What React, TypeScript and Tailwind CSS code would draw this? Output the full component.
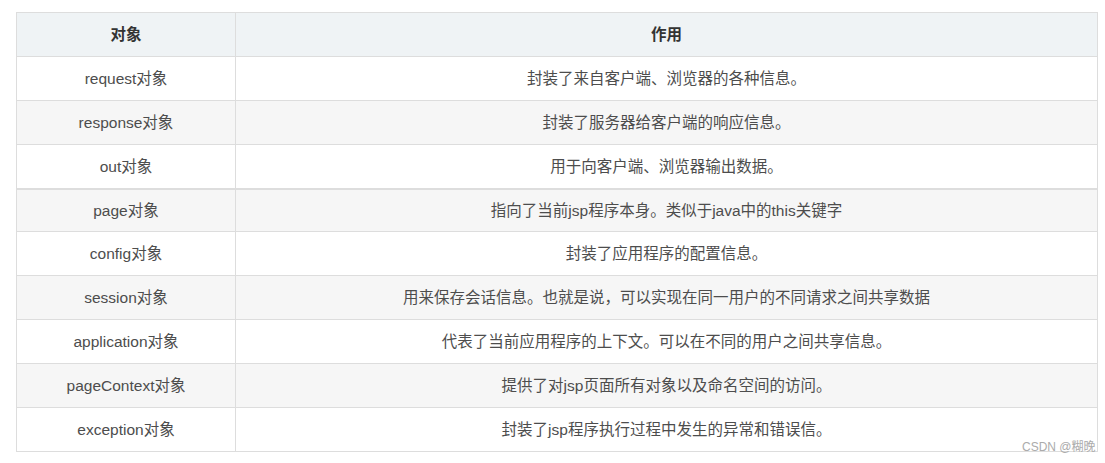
import React from 'react';

const rows: [string, string][] = [
  ['request对象', '封装了来自客户端、浏览器的各种信息。'],
  ['response对象', '封装了服务器给客户端的响应信息。'],
  ['out对象', '用于向客户端、浏览器输出数据。'],
  ['page对象', '指向了当前jsp程序本身。类似于java中的this关键字'],
  ['config对象', '封装了应用程序的配置信息。'],
  ['session对象', '用来保存会话信息。也就是说，可以实现在同一用户的不同请求之间共享数据'],
  ['application对象', '代表了当前应用程序的上下文。可以在不同的用户之间共享信息。'],
  ['pageContext对象', '提供了对jsp页面所有对象以及命名空间的访问。'],
  ['exception对象', '封装了jsp程序执行过程中发生的异常和错误信。'],
];

export default function App() {
  return (
    <div
      className="relative w-[1105px] h-[463px] bg-white pt-3 pl-4 text-[15.5px] text-[#4d4d4d]"
      style={{ fontFamily: '"Liberation Sans", "Noto Sans CJK SC", sans-serif' }}
    >
      <table className="w-[1082px] border-collapse border border-[#dddddd] table-fixed">
        <colgroup>
          <col className="w-[219px]" />
          <col />
        </colgroup>
        <thead>
          <tr className="h-[44px] bg-[#eff3f5] text-[#333333]">
            <th className="border border-[#dddddd] font-bold">对象</th>
            <th className="border border-[#dddddd] font-bold">作用</th>
          </tr>
        </thead>
        <tbody>
          {rows.map(([name, desc], i) => {
            // the page row sits under a slightly heavier rule
            const cell = `border border-[#dddddd] text-center ${i === 3 ? 'border-t-2' : ''}`;
            return (
              <tr
                key={name}
                className={`${i === 3 ? 'h-[43px]' : 'h-[44px]'} ${i % 2 === 1 ? 'bg-[#f6f6f6]' : 'bg-white'}`}
              >
                <td className={cell}>{name}</td>
                <td className={cell}>{desc}</td>
              </tr>
            );
          })}
        </tbody>
      </table>
      <div className="absolute left-[1022px] top-[440px] text-[12px] leading-[14px] text-[#ababab]">CSDN @糊晚</div>
    </div>
  );
}
